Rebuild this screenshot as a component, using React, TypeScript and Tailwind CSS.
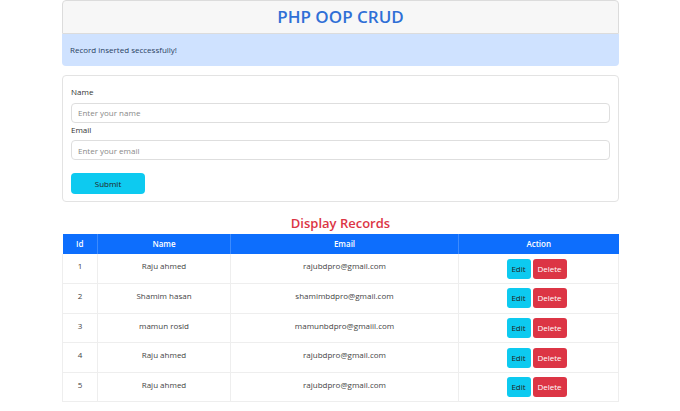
const rows = [
  { id: 1, name: 'Raju ahmed', email: 'rajubdpro@gmail.com' },
  { id: 2, name: 'Shamim hasan', email: 'shamimbdpro@gmail.com' },
  { id: 3, name: 'mamun rosid', email: 'mamunbdpro@gmaiil.com' },
  { id: 4, name: 'Raju ahmed', email: 'rajubdpro@gmail.com' },
  { id: 5, name: 'Raju ahmed', email: 'rajubdpro@gmail.com' },
];

export default function App() {
  return (
    <div className="w-[680px] h-[411px] bg-white overflow-hidden" style={{ fontFamily: '"Open Sans", sans-serif' }}>
      <div className="w-[557px] ml-[62px]">
        <div className="h-[34px] bg-[#f7f7f7] border border-[#dcdcdc] rounded-t flex items-center justify-center">
          <h1 className="text-[17px] font-semibold text-[#2f6fd6]">PHP OOP CRUD</h1>
        </div>
        <div className="h-[32px] bg-[#cfe2ff] rounded-b flex items-center px-2 text-[8px] text-[#2a3f5f]">
          Record inserted seccessfully!
        </div>

        <form className="mt-[9px] border border-[#e3e3e3] rounded px-[8px] pt-[10px] h-[127px]">
          <label className="block text-[8px] leading-[12px] text-[#333]">Name</label>
          <input
            className="mt-[1px] w-full h-[20px] border border-[#dedede] rounded px-[6px] text-[8px] placeholder-[#888]"
            placeholder="Enter your name"
          />
          <label className="block mt-[1px] text-[8px] leading-[12px] text-[#333]">Email</label>
          <input
            className="mt-[1px] w-full h-[20px] border border-[#dedede] rounded px-[6px] text-[8px] placeholder-[#888]"
            placeholder="Enter your email"
          />
          <button type="button" className="mt-[13px] w-[74px] h-[21px] bg-[#0dcaf0] rounded text-[8px] text-[#222]">
            Submit
          </button>
        </form>

        <h2 className="mt-[11px] text-center text-[13px] font-semibold text-[#dc3545] leading-[20px]">Display Records</h2>

        <table className="mt-[1px] w-full border-collapse text-[8px] text-[#444]">
          <thead>
            <tr className="bg-[#0d6efd] text-white h-[20px]">
              <th className="w-[35px] font-semibold border-r border-[#3d8bfd]">Id</th>
              <th className="w-[133px] font-semibold border-r border-[#3d8bfd]">Name</th>
              <th className="w-[228px] font-semibold border-r border-[#3d8bfd]">Email</th>
              <th className="font-semibold">Action</th>
            </tr>
          </thead>
          <tbody>
            {rows.map((r) => (
              <tr key={r.id} className="h-[29.6px] border-b border-[#eee]">
                <td className="text-center align-top pt-[6px] border-l border-r border-[#eee]">{r.id}</td>
                <td className="text-center align-top pt-[6px] border-r border-[#eee]">{r.name}</td>
                <td className="text-center align-top pt-[6px] border-r border-[#eee]">{r.email}</td>
                <td className="border-r border-[#eee]">
                  <div className="flex justify-center gap-[2px] pr-[4px]">
                    <button className="w-[24px] h-[20px] bg-[#0dcaf0] rounded-[3px] text-[8px] text-[#222]">Edit</button>
                    <button className="w-[34px] h-[20px] bg-[#dc3545] rounded-[3px] text-[8px] text-white">Delete</button>
                  </div>
                </td>
              </tr>
            ))}
          </tbody>
        </table>
      </div>
    </div>
  );
}
